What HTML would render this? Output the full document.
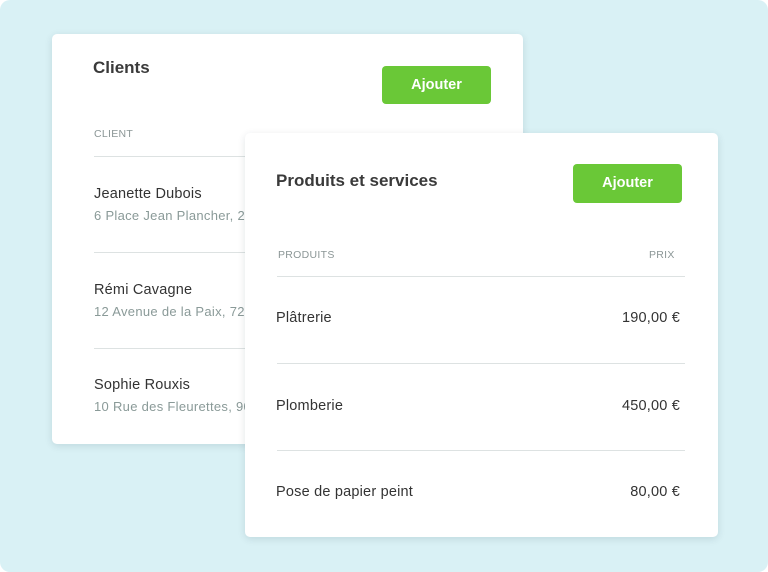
<!DOCTYPE html>
<html><head><meta charset="utf-8"><style>
*{margin:0;padding:0;box-sizing:border-box}
html,body{width:768px;height:572px;overflow:hidden;background:#fff}
body{font-family:"Liberation Sans",sans-serif;color:#333}
.bg{position:absolute;left:0;top:0;width:768px;height:572px;background:#d9f1f5;border-radius:10px}
.card{position:absolute;background:#fff;border-radius:5px;box-shadow:0 2px 8px rgba(0,40,60,.12)}
.t{position:absolute;white-space:nowrap}
.r{position:absolute;white-space:nowrap;right:88px;text-align:right}
.h{font-size:17px;font-weight:bold;color:#3a3a3a}
.btn{position:absolute;background:#6ac837;border-radius:4px;color:#fff;font-weight:bold;font-size:14.5px;text-align:center}
.cap{font-size:10.5px;color:#8b9696;letter-spacing:.3px}
.n{font-size:14.5px;color:#333;letter-spacing:.2px}
.a{font-size:13px;color:#8a9a98;letter-spacing:.3px}
.line{position:absolute;height:1px;background:#dde2e2}
</style></head><body>
<div class="bg"></div>
<div class="card" style="left:52px;top:34px;width:471px;height:410px"></div>
<div class="t h" style="left:93px;top:58px">Clients</div>
<div class="btn" style="left:382px;top:66px;width:109px;height:38px;line-height:38px">Ajouter</div>
<div class="t cap" style="left:94px;top:128px">CLIENT</div>
<div class="line" style="left:94px;top:156px;width:160px"></div>
<div class="t n" style="left:94px;top:186px">Jeanette Dubois</div>
<div class="t a" style="left:94px;top:208px">6 Place Jean Plancher, 2</div>
<div class="line" style="left:94px;top:252px;width:160px"></div>
<div class="t n" style="left:94px;top:282px">Rémi Cavagne</div>
<div class="t a" style="left:94px;top:304px">12 Avenue de la Paix, 720</div>
<div class="line" style="left:94px;top:348px;width:160px"></div>
<div class="t n" style="left:94px;top:377px">Sophie Rouxis</div>
<div class="t a" style="left:94px;top:399px">10 Rue des Fleurettes, 90</div>

<div class="card" style="left:245px;top:133px;width:473px;height:404px"></div>
<div class="t h" style="left:276px;top:171px">Produits et services</div>
<div class="btn" style="left:573px;top:164px;width:109px;height:39px;line-height:39px">Ajouter</div>
<div class="t cap" style="left:278px;top:249px">PRODUITS</div>
<div class="t cap" style="left:649px;top:249px">PRIX</div>
<div class="line" style="left:277px;top:276px;width:408px"></div>
<div class="t n" style="left:276px;top:310px">Plâtrerie</div>
<div class="r n" style="top:310px">190,00 €</div>
<div class="line" style="left:277px;top:363px;width:408px"></div>
<div class="t n" style="left:276px;top:398px">Plomberie</div>
<div class="r n" style="top:398px">450,00 €</div>
<div class="line" style="left:277px;top:450px;width:408px"></div>
<div class="t n" style="left:276px;top:484px">Pose de papier peint</div>
<div class="r n" style="top:484px">80,00 €</div>
</body></html>
